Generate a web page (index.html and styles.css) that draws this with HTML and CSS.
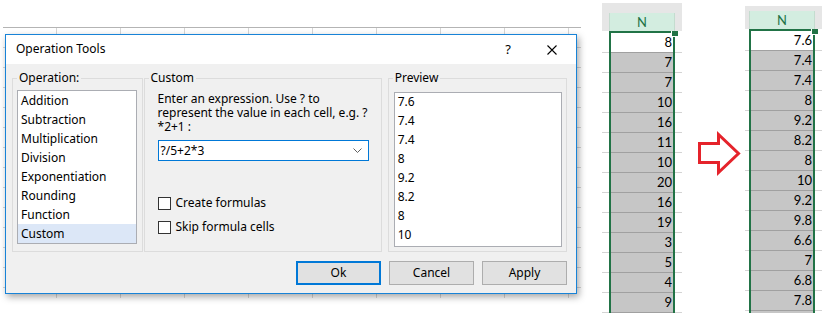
FILE: index.html
```html
<!DOCTYPE html>
<html>
<head>
    <meta charset="utf-8">
    <title>Operation Tools</title>
    <link rel="stylesheet" href="styles.css">
</head>
<body>
    <!-- worksheet with the dialog on top -->
    <div class="sheet">
        <div class="dialog">
            <div class="titlebar">
                <span class="title">Operation Tools</span>
                <span class="tb-btn help">?</span>
                <span class="tb-btn close">
                    <svg width="10" height="10" viewBox="0 0 10 10"><path d="M0.5 0.5L9.5 9.5M9.5 0.5L0.5 9.5" stroke="#000" stroke-width="1.1" fill="none"/></svg>
                </span>
            </div>
            <div class="dialog-body">
                <div class="groups">
                    <fieldset class="group group-op">
                        <legend>Operation:</legend>
                        <ul class="listbox ops">
                            <li>Addition</li>
                            <li>Subtraction</li>
                            <li>Multiplication</li>
                            <li>Division</li>
                            <li>Exponentiation</li>
                            <li>Rounding</li>
                            <li>Function</li>
                            <li class="selected">Custom</li>
                        </ul>
                    </fieldset>
                    <fieldset class="group group-custom">
                        <legend>Custom</legend>
                        <div class="custom-inner">
                            <p class="hint">Enter an expression. Use ? to<br>represent the value in each cell, e.g. ?<br>*2+1 :</p>
                            <div class="combo">
                                <span>?/5+2*3</span>
                                <svg width="9" height="6" viewBox="0 0 9 6"><path d="M0.5 0.5L4.5 4.5L8.5 0.5" stroke="#606060" fill="none"/></svg>
                            </div>
                            <label class="check check-first"><span class="box"></span>Create formulas</label>
                            <label class="check"><span class="box"></span>Skip formula cells</label>
                        </div>
                    </fieldset>
                    <fieldset class="group group-preview">
                        <legend>Preview</legend>
                        <ul class="listbox preview">
                            <li>7.6</li>
                            <li>7.4</li>
                            <li>7.4</li>
                            <li>8</li>
                            <li>9.2</li>
                            <li>8.2</li>
                            <li>8</li>
                            <li>10</li>
                        </ul>
                    </fieldset>
                </div>
                <div class="buttons">
                    <button class="btn btn-default">Ok</button>
                    <button class="btn">Cancel</button>
                    <button class="btn">Apply</button>
                </div>
            </div>
        </div>
    </div>

    <!-- column before -->
    <div class="col col-before">
        <div class="col-head"><div class="col-name">N</div></div>
        <div class="col-body">
            <div class="gutter"></div>
            <div class="sel">
                <div class="cell active">8</div>
                <div class="cell">7</div>
                <div class="cell">7</div>
                <div class="cell">10</div>
                <div class="cell">16</div>
                <div class="cell">11</div>
                <div class="cell">10</div>
                <div class="cell">20</div>
                <div class="cell">16</div>
                <div class="cell">19</div>
                <div class="cell">3</div>
                <div class="cell">5</div>
                <div class="cell">4</div>
                <div class="cell">9</div>
            </div>
            <div class="gutter gutter-right"></div>
        </div>
        <span class="handle"></span>
    </div>

    <svg class="arrow" width="46" height="46" viewBox="696 131 46 46">
        <polygon points="699.5,143.5 718.5,143.5 718.5,134.5 738.5,153.5 718.5,172.5 718.5,162.5 699.5,162.5" fill="#fff" stroke="#e5232b" stroke-width="3"/>
    </svg>

    <!-- column after -->
    <div class="col col-after">
        <div class="col-head"><div class="col-name">N</div></div>
        <div class="col-body">
            <div class="gutter"></div>
            <div class="sel">
                <div class="cell active">7.6</div>
                <div class="cell">7.4</div>
                <div class="cell">7.4</div>
                <div class="cell">8</div>
                <div class="cell">9.2</div>
                <div class="cell">8.2</div>
                <div class="cell">8</div>
                <div class="cell">10</div>
                <div class="cell">9.2</div>
                <div class="cell">9.8</div>
                <div class="cell">6.6</div>
                <div class="cell">7</div>
                <div class="cell">6.8</div>
                <div class="cell">7.8</div>
                <div class="cell"></div>
            </div>
            <div class="gutter gutter-right"></div>
        </div>
        <span class="handle"></span>
    </div>
</body>
</html>
```

FILE: styles.css
```css
* {
    box-sizing: border-box;
}
body {
    margin: 0;
    width: 828px;
    height: 313px;
    overflow: hidden;
    background: #fff;
    display: flex;
    align-items: flex-start;
    font-family: "Noto Sans", "Liberation Sans", sans-serif;
    font-size: 12px;
    color: #000;
}

/* worksheet behind the dialog */
.sheet {
    margin: 27px 0 0 3px;
    width: 578px;
    height: 271px;
    padding: 6px 4px 5px 2px;
    border-top: 1px solid #b4b4b4;
    background-color: #fff;
    background-image:
        linear-gradient(#d6d6d6 1px, transparent 1px),
        linear-gradient(90deg, #d6d6d6 1px, transparent 1px);
    background-size: 100% 20px, 64px 100%;
    background-position: 0 19px, 53px 0;
}

/* dialog */
.dialog {
    width: 572px;
    height: 260px;
    border: 1px solid #1883d7;
    background: #f0f0f0;
    box-shadow: 2px 3px 7px rgba(0, 0, 0, 0.35);
    display: flex;
    flex-direction: column;
}
.titlebar {
    height: 29px;
    background: #fff;
    display: flex;
    align-items: center;
    padding: 0 2px 2px 10px;
}
.title {
    flex: 1;
    font-size: 12px;
}
.tb-btn {
    width: 44px;
    height: 27px;
    display: flex;
    align-items: center;
    justify-content: center;
}
.help {
    font-size: 13px;
}
.close {
    padding-top: 2px;
}
.dialog-body {
    flex: 1;
    padding: 7px 9px 8px 6px;
    display: flex;
    flex-direction: column;
}
.groups {
    display: flex;
    height: 181px;
}

/* group boxes */
.group {
    margin: 0;
    padding: 0 4px;
    border: 1px solid #dcdcdc;
    min-width: 0;
    height: 181px;
}
.group legend {
    padding: 0 2px;
    line-height: 14px;
    font-size: 12px;
}
.group-op {
    width: 131px;
}
.group-custom {
    width: 239px;
    margin-left: 1px;
}
.group-preview {
    width: 180px;
    margin-left: 6px;
}

/* list boxes */
.listbox {
    margin: 0;
    padding: 0;
    list-style: none;
    background: #fff;
    border: 1px solid #abadb3;
}
.listbox li {
    height: 19px;
    line-height: 19px;
    padding-left: 3px;
    white-space: nowrap;
}
.ops {
    margin-top: 5px;
    width: 120px;
    height: 154px;
}
.ops .selected {
    background: #dce7f7;
}
.preview {
    margin-top: 7px;
    margin-left: 1px;
    width: 168px;
    height: 155px;
}
.preview li {
    line-height: 18px;
}

/* custom expression panel */
.custom-inner {
    padding-left: 9px;
}
.hint {
    margin: 7px 0 0 0;
    line-height: 14px;
    white-space: nowrap;
}
.combo {
    margin-top: 6px;
    width: 211px;
    height: 21px;
    border: 1px solid #0078d7;
    background: #fff;
    display: flex;
    align-items: center;
    justify-content: space-between;
    padding: 0 6px 0 2px;
}
.combo svg {
    margin-top: 1px;
}
.check {
    display: flex;
    align-items: center;
    height: 24px;
}
.check-first {
    margin-top: 29px;
}
.box {
    width: 13px;
    height: 13px;
    border: 1px solid #333;
    background: #fff;
    margin-right: 5px;
    margin-top: 2px;
}

/* buttons */
.buttons {
    margin-top: 9px;
    display: flex;
    justify-content: flex-end;
    gap: 8px;
}
.btn {
    width: 85px;
    height: 24px;
    margin: 0;
    padding: 0 0 2px 0;
    background: #e1e1e1;
    border: 1px solid #adadad;
    font-family: "Noto Sans", "Liberation Sans", sans-serif;
    font-size: 12px;
    color: #000;
}
.btn-default {
    border: 2px solid #0078d7;
}

/* spreadsheet columns */
.col {
    position: relative;
    font-family: Lato, "Liberation Sans", sans-serif;
    font-size: 13px;
}
.col-before {
    margin: 3px 0 0 21px;
    width: 80px;
}
.col-after {
    margin: 6px 0 0 3px;
    width: 77px;
}
.col-head {
    background: #e6e6e6;
    padding-top: 10px;
    padding-left: 7px;
}
.col-after .col-head {
    padding-top: 5px;
    padding-left: 4px;
}
.col-name {
    width: 66px;
    height: 18px;
    line-height: 18px;
    text-align: center;
    background: #d3ede0;
    color: #217346;
    border-left: 1px solid #c4dccf;
    border-right: 1px solid #c4dccf;
}
.col-body {
    display: flex;
    height: 282px;
    overflow: hidden;
}
.col-after .col-body {
    height: 284px;
}
.gutter {
    width: 7px;
    margin-top: 2px;
    background-image: linear-gradient(transparent 19px, #d4d4d4 19px);
    background-size: 100% 20px;
}
.col-after .gutter {
    width: 4px;
}
.col-after .gutter-right {
    width: 7px;
}
.sel {
    width: 66px;
    border: 2px solid #217346;
    border-bottom: none;
}
.cell {
    height: 20px;
    line-height: 19px;
    background: #c6c6c6;
    border-bottom: 1px solid #a0a0a0;
    text-align: right;
    padding-right: 1px;
}
.cell.active {
    background: #fff;
}
.handle {
    position: absolute;
    top: 28px;
    left: 69px;
    width: 7px;
    height: 6px;
    background: #217346;
    border-left: 1px solid #fff;
    border-bottom: 1px solid #fff;
}
.col-after .handle {
    top: 23px;
    left: 66px;
}
.arrow {
    margin: 131px 0 0 14px;
    flex-shrink: 0;
}
```
